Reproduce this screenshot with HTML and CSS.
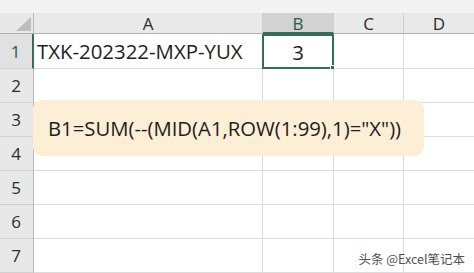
FILE: index.html
```html
<!DOCTYPE html>
<html>
<head>
<meta charset="utf-8">
<link rel="stylesheet" href="styles.css">
</head>
<body>
<div class="sheet">
  <div class="strip"></div>
  <div class="grid">
    <div class="corner"><span class="tri"></span></div>
    <div class="colhead">A</div>
    <div class="colhead sel">B</div>
    <div class="colhead">C</div>
    <div class="colhead">D</div>

    <div class="rowhead sel r1">1</div>
    <div class="cell text r1">TXK-202322-MXP-YUX</div>
    <div class="cell active r1">3<span class="handle"></span></div>
    <div class="cell r1"></div>
    <div class="cell r1"></div>

    <div class="rowhead">2</div><div class="cell"></div><div class="cell"></div><div class="cell"></div><div class="cell"></div>
    <div class="rowhead">3</div><div class="cell"></div><div class="cell"></div><div class="cell"></div><div class="cell"></div>
    <div class="rowhead">4</div><div class="cell"></div><div class="cell"></div><div class="cell"></div><div class="cell"></div>
    <div class="rowhead">5</div><div class="cell"></div><div class="cell"></div><div class="cell"></div><div class="cell"></div>
    <div class="rowhead">6</div><div class="cell"></div><div class="cell"></div><div class="cell"></div><div class="cell"></div>
    <div class="rowhead">7</div><div class="cell"></div><div class="cell"></div><div class="cell"></div><div class="cell"></div>
  </div>
  <div class="note">B1=SUM(--(MID(A1,ROW(1:99),1)="X"))</div>
  <div class="mark">头条 @Excel笔记本</div>
</div>
</body>
</html>
```
FILE: styles.css
```css
* { box-sizing: border-box; }
html, body { margin: 0; padding: 0; background: #ffffff; }
body { width: 474px; height: 273px; overflow: hidden; font-family: "Open Sans", "Noto Sans", sans-serif; }
.sheet { position: relative; width: 474px; height: 273px; overflow: hidden; }
.strip { height: 13px; background: #f3f3f3; }
.grid {
  display: grid;
  grid-template-columns: 34px 229px 71px 70px 71px;
  grid-template-rows: 21px 35px repeat(6, 34px);
}
.corner { background: #e8e8e8; border-right: 1px solid #b9b9b9; border-bottom: 1px solid #b0b0b0; position: relative; }
.tri { position: absolute; left: 16px; top: 4px; width: 0; height: 0; border-left: 15px solid transparent; border-bottom: 14px solid #bdbdbd; }
.colhead {
  background: #e9e9e9; border-right: 1px solid #cfcfcf; border-bottom: 1px solid #b0b0b0;
  display: flex; align-items: center; justify-content: center;
  font-size: 17px; color: #2b2b2b; padding-top: 1px;
}
.colhead.sel { background: #d2d2d2; border-bottom: 2px solid #346f55; color: #2c5a44; }
.rowhead {
  background: #e8e8e8; border-right: 1px solid #b9b9b9; border-bottom: 1px solid #d0d0d0;
  display: flex; align-items: center; justify-content: center;
  font-size: 17px; color: #2b2b2b; padding-right: 1px;
}
.rowhead.sel { background: #e1e1e1; border-right: 2px solid #346f55; color: #2c5a44; }
.cell { border-right: 1px solid #dcdcdc; border-bottom: 1px solid #dcdcdc; background: #fff; position: relative; }
.cell.text { display: flex; align-items: center; padding-left: 3px; font-size: 20.4px; color: #1e1e1e; }
.cell.active {
  border: 2px solid #346f55; margin-left: -1px;
  display: flex; align-items: center; justify-content: center;
  font-size: 20.4px; color: #1e1e1e;
}
.handle { position: absolute; right: -4px; bottom: -4px; width: 6px; height: 6px; background: #346f55; border: 1px solid #fff; }
.note {
  position: absolute; left: 33px; top: 100px; width: 391px; height: 56px;
  background: #fdefd5; border-radius: 9px;
  display: flex; align-items: center; padding-left: 15px;
  font-size: 20.3px; color: #1e1e1e;
}
.mark {
  position: absolute; right: 9px; bottom: 5px;
  font-family: "Noto Sans CJK SC", "Noto Sans", sans-serif; font-size: 12.5px; color: #505050;
  text-shadow: 0 0 2px #fff, 0 0 2px #fff;
}
```
